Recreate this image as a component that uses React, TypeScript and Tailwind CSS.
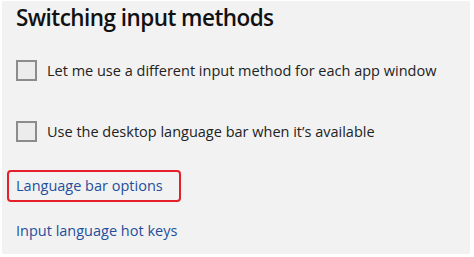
export default function App() {
  const options = [
    'Let me use a different input method for each app window',
    'Use the desktop language bar when it\u2019s available',
  ];

  return (
    <div className="w-[474px] h-[257px] bg-white pt-[1px] pl-[2px] font-['Open_Sans','Noto_Sans',sans-serif]">
      <div className="w-[468px] h-[253px] bg-[#f2f2f2] pl-[14px] pt-[2px] flex flex-col">
        <h2 className="text-[22.5px] leading-[30px] font-semibold text-[#111] tracking-[-0.55px]">
          Switching input methods
        </h2>

        <div className="flex flex-col gap-[40px] mt-[27px]">
          {options.map((label) => (
            <label key={label} className="flex items-center gap-[10px]">
              <span className="w-[21px] h-[21px] border-2 border-[#8c8c8c] bg-[#ececec] shrink-0" />
              <span className="text-[14.5px] leading-[21px] text-[#222]">{label}</span>
            </label>
          ))}
        </div>

        <div className="mt-[28px] -ml-[9px] w-[174px] h-[32px] border-2 border-[#e5202a] rounded-[4px] flex items-center pl-[7px]">
          <a className="text-[14.5px] text-[#1f4f9c] leading-[20px]">Language bar options</a>
        </div>

        <a className="mt-[19px] text-[14.5px] text-[#1f4f9c] leading-[20px]">Input language hot keys</a>
      </div>
    </div>
  );
}
